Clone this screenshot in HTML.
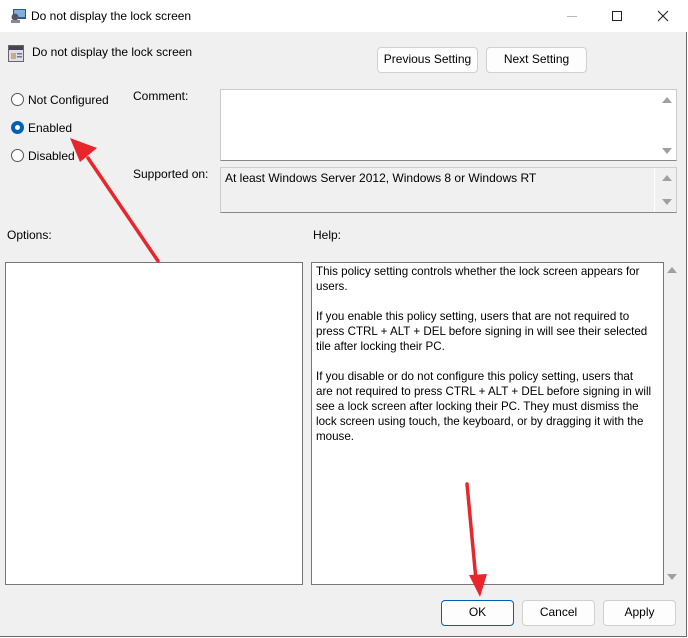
<!DOCTYPE html>
<html><head><style>
*{margin:0;padding:0;box-sizing:border-box}
body{width:688px;height:638px;background:#fff;font-family:"Liberation Sans",sans-serif;font-size:12px;color:#000;position:relative;overflow:hidden}
.a{position:absolute;white-space:nowrap}
.win{position:absolute;left:0;top:0;width:687px;height:637px;border:1px solid #6b6b6b;border-top:none;border-left:none;background:#f0f0f0}
.btn{position:absolute;background:#fdfdfd;border:1px solid #d0d0d0;border-radius:4px;text-align:center;line-height:23px;font-size:12px}
.box{position:absolute;border:1px solid #a0a0a0;background:#fff}
.rad{position:absolute;width:13px;height:13px;border:1px solid #555;border-radius:50%;background:#fff}
.up,.dn{position:absolute;width:0;height:0;border-left:5px solid transparent;border-right:5px solid transparent}
.up{border-bottom:6px solid #a0a0a0}.dn{border-top:6px solid #a0a0a0}
</style></head><body>
<div class="win"></div>
<div class="a" style="left:0;top:0;width:687px;height:32px;background:#fff"></div>
<svg class="a" style="left:10px;top:8px" width="17" height="16"><rect x="3" y="1" width="13" height="10" fill="#2a5a8a"/><rect x="4" y="2" width="11" height="7" fill="#7fb0dc"/><circle cx="5" cy="9" r="3.5" fill="#556"/><rect x="1" y="12" width="9" height="3" fill="#889"/></svg>
<div class="a" style="left:31px;top:9px">Do not display the lock screen</div>
<div class="a" style="left:567px;top:16px;width:10px;height:1px;background:#bbb"></div>
<div class="a" style="left:612px;top:11px;width:10px;height:10px;border:1px solid #222"></div>
<svg class="a" style="left:657px;top:10px" width="12" height="12"><path d="M1 1L11 11M11 1L1 11" stroke="#222" stroke-width="1.1"/></svg>
<svg class="a" style="left:8px;top:45px" width="16" height="17"><rect x="0.5" y="0.5" width="15" height="16" fill="#dde" stroke="#666"/><rect x="1" y="1" width="14" height="4" fill="#445"/><rect x="3" y="8" width="5" height="6" fill="#ca8"/><rect x="9" y="8" width="5" height="1.5" fill="#777"/><rect x="9" y="11" width="5" height="1.5" fill="#777"/></svg>
<div class="a" style="left:32px;top:45px">Do not display the lock screen</div>
<div class="btn" style="left:377px;top:47px;width:101px;height:26px">Previous Setting</div>
<div class="btn" style="left:486px;top:47px;width:101px;height:26px">Next Setting</div>
<div class="rad" style="left:11px;top:93px"></div><div class="a" style="left:28px;top:93px">Not Configured</div>
<div class="rad" style="left:11px;top:121px;border:4px solid #005fb8"></div><div class="a" style="left:28px;top:121px">Enabled</div>
<div class="rad" style="left:11px;top:149px"></div><div class="a" style="left:28px;top:149px">Disabled</div>
<div class="a" style="left:133px;top:89px">Comment:</div>
<div class="box" style="left:220px;top:89px;width:457px;height:72px;border-color:#ccc;border-bottom-color:#888"></div>
<div class="up" style="left:662px;top:97px"></div><div class="dn" style="left:662px;top:148px"></div>
<div class="a" style="left:133px;top:167px">Supported on:</div>
<div class="box" style="left:220px;top:167px;width:457px;height:46px;background:#f0f0f0;border-color:#ccc;border-bottom-color:#888"></div>
<div class="a" style="left:654px;top:168px;width:1px;height:44px;background:#fff"></div>
<div class="a" style="left:225px;top:171px">At least Windows Server 2012, Windows 8 or Windows RT</div>
<div class="up" style="left:662px;top:175px"></div><div class="dn" style="left:662px;top:199px"></div>
<div class="a" style="left:7px;top:228px">Options:</div>
<div class="a" style="left:313px;top:228px">Help:</div>
<div class="box" style="left:5px;top:262px;width:298px;height:323px;border-color:#777"></div>
<div class="box" style="left:311px;top:262px;width:353px;height:323px;border-color:#777"></div>
<div class="up" style="left:667px;top:267px"></div><div class="dn" style="left:667px;top:574px"></div>
<div class="a" style="left:316px;top:264px;line-height:15px;font-size:11.6px">This policy setting controls whether the lock screen appears for<br>users.<br><br>If you enable this policy setting, users that are not required to<br>press CTRL + ALT + DEL before signing in will see their selected<br>tile after locking their PC.<br><br>If you disable or do not configure this policy setting, users that<br>are not required to press CTRL + ALT + DEL before signing in will<br>see a lock screen after locking their PC. They must dismiss the<br>lock screen using touch, the keyboard, or by dragging it with the<br>mouse.</div>
<div class="btn" style="left:441px;top:600px;width:73px;height:26px;border-color:#005fb8">OK</div>
<div class="btn" style="left:522px;top:600px;width:73px;height:26px">Cancel</div>
<div class="btn" style="left:603px;top:600px;width:73px;height:26px">Apply</div>
<svg class="a" style="left:0;top:0" width="688" height="638">
<path d="M158 261L88 158" stroke="#e8262b" stroke-width="3.5" stroke-linecap="round"/>
<path d="M70 138L97 148L80 162Z" fill="#e8262b"/>
<path d="M467 484L476 580" stroke="#e8262b" stroke-width="3.5" stroke-linecap="round"/>
<path d="M469 575L487 574L480 597Z" fill="#e8262b"/>
</svg>
</body></html>
